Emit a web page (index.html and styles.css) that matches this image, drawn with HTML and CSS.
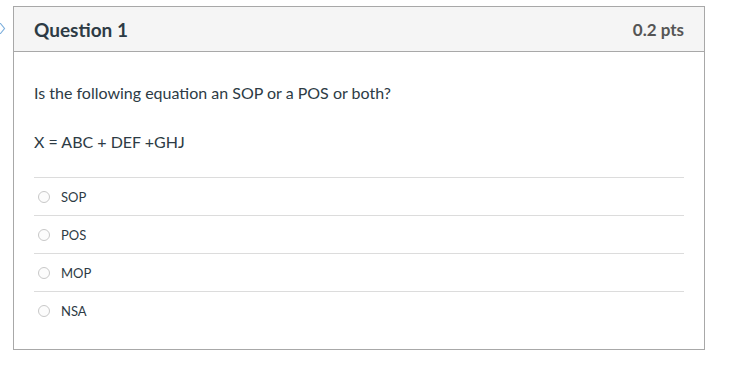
FILE: index.html
```html
<!DOCTYPE html>
<html lang="en">

<head>
  <meta charset="UTF-8">
  <meta name="viewport" content="width=device-width, initial-scale=1.0">
  <title>Question 1</title>
  <link rel="stylesheet" href="styles.css">
</head>

<body>
  <div class="quiz">
    <!-- flag marker -->
    <div class="flag">
      <svg width="13" height="20" viewBox="0 0 13 20">
        <path d="M-8 4.5 H0.5 L4.5 9.5 L0.5 14.5 H-8" fill="#fff" stroke="#7fb0dd" stroke-width="1.2" />
      </svg>
    </div>

    <div class="question">
      <div class="question_header">
        <span class="question_name">Question 1</span>
        <span class="question_points">0.2 pts</span>
      </div>
      <div class="question_body">
        <p class="question_text">Is the following equation an SOP or a POS or both?</p>
        <p class="question_text eq">X = ABC + DEF +GHJ</p>

        <div class="answers">
          <label class="answer"><span class="radio"></span>SOP</label>
          <label class="answer"><span class="radio"></span>POS</label>
          <label class="answer"><span class="radio"></span>MOP</label>
          <label class="answer"><span class="radio"></span>NSA</label>
        </div>
      </div>
    </div>
  </div>
</body>

</html>
```

FILE: styles.css
```css
body {
  margin: 0;
  font-family: Lato, "Liberation Sans", sans-serif;
  color: #2d3b45;
  background-color: #fff;
}

.quiz {
  display: flex;
  padding-top: 6px;
}

.flag {
  width: 13px;
  padding-top: 13px;
  overflow: hidden;
}

.flag svg {
  display: block;
}

.question {
  width: 690px;
  border: 1px solid #a8a8a8;
}

.question_header {
  display: flex;
  justify-content: space-between;
  align-items: center;
  height: 44px;
  padding: 0 20px;
  background-color: #f5f5f5;
  border-bottom: 1px solid #a8a8a8;
}

.question_name {
  font-size: 19px;
  font-weight: bold;
}

.question_points {
  font-size: 17px;
  font-weight: bold;
  color: #555;
}

.question_body {
  padding: 31px 20px 20px;
}

.question_text {
  margin: 0;
  font-size: 16px;
  line-height: 20px;
}

.question_text.eq {
  margin-top: 29px;
}

.answers {
  margin-top: 25px;
}

.answer {
  display: flex;
  align-items: center;
  height: 37px;
  border-top: 1px solid #dcdcdc;
  padding-left: 4px;
  font-size: 13px;
}

.radio {
  width: 10px;
  height: 10px;
  border: 1px solid #c8c8c8;
  border-radius: 50%;
  background-color: #fcfcfc;
  margin-right: 11px;
}
```
